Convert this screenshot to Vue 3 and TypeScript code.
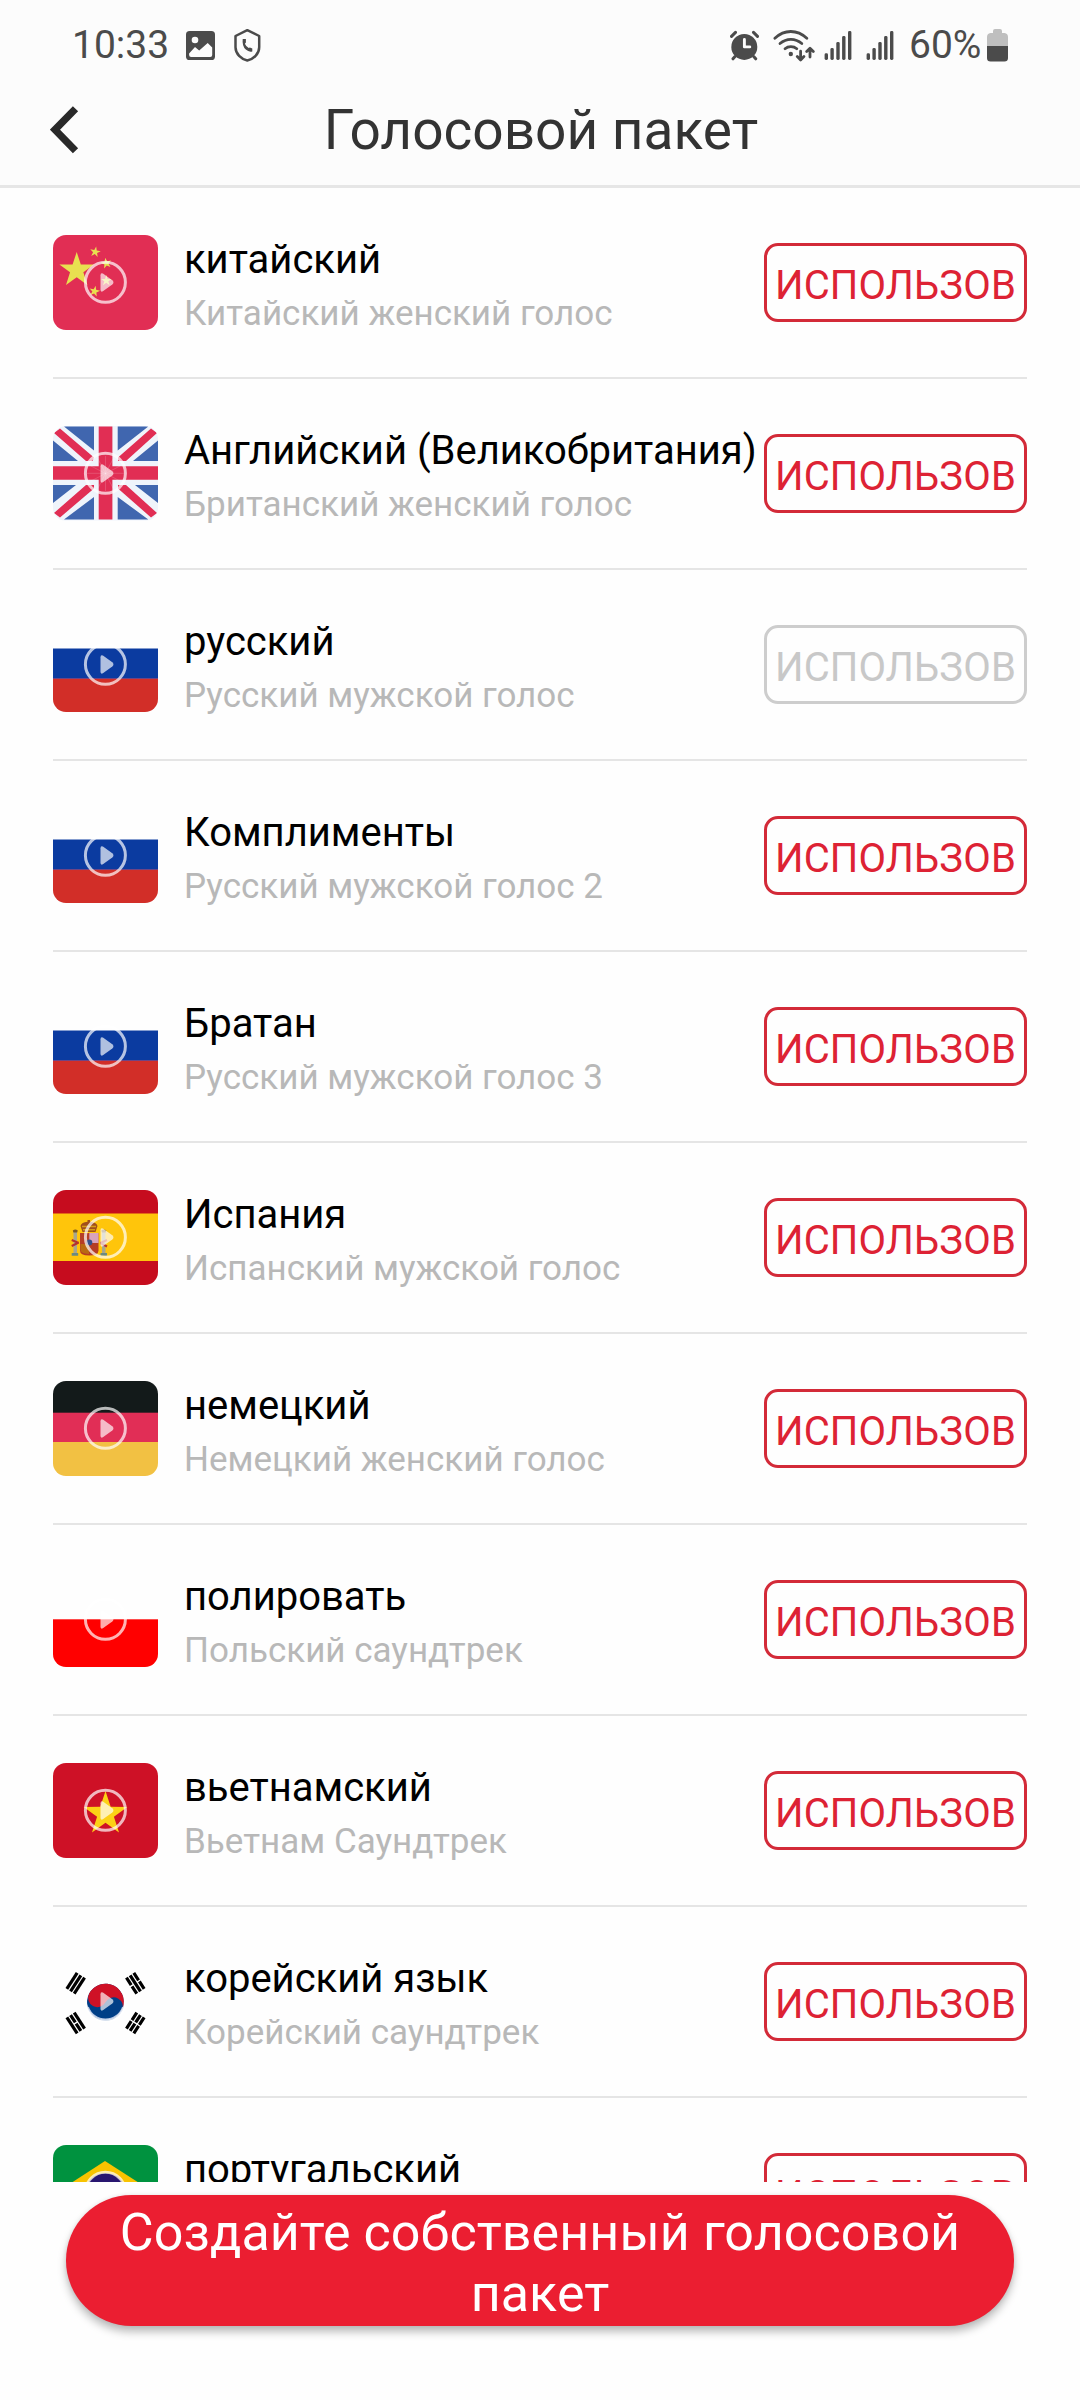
<script setup lang="ts">
type Flag = 'cn' | 'gb' | 'ru' | 'es' | 'de' | 'pl' | 'vn' | 'kr' | 'br'

interface VoicePack {
  flag: Flag
  name: string
  note?: string
  active?: boolean
}

const packs: VoicePack[] = [
  { flag: 'cn', name: 'китайский', note: 'Китайский женский голос' },
  { flag: 'gb', name: 'Английский (Великобритания)', note: 'Британский женский голос' },
  { flag: 'ru', name: 'русский', note: 'Русский мужской голос', active: true },
  { flag: 'ru', name: 'Комплименты', note: 'Русский мужской голос 2' },
  { flag: 'ru', name: 'Братан', note: 'Русский мужской голос 3' },
  { flag: 'es', name: 'Испания', note: 'Испанский мужской голос' },
  { flag: 'de', name: 'немецкий', note: 'Немецкий женский голос' },
  { flag: 'pl', name: 'полировать', note: 'Польский саундтрек' },
  { flag: 'vn', name: 'вьетнамский', note: 'Вьетнам Саундтрек' },
  { flag: 'kr', name: 'корейский язык', note: 'Корейский саундтрек' },
  { flag: 'br', name: 'португальский' },
]

// Points of a five-pointed star around (cx, cy), turned by `turn` degrees.
function star(cx: number, cy: number, r: number, turn = 0): string {
  return Array.from({ length: 10 }, (_, i) => {
    const a = ((i * 36 - 90 + turn) * Math.PI) / 180
    const d = i % 2 ? r * 0.385 : r
    return `${(cx + d * Math.cos(a)).toFixed(2)},${(cy + d * Math.sin(a)).toFixed(2)}`
  }).join(' ')
}

const signalBars = [
  { x: 0.6, y: 25.3 },
  { x: 6.4, y: 20 },
  { x: 12.3, y: 14 },
  { x: 18.1, y: 8 },
  { x: 24, y: 3 },
]

// Trigrams of the Korean flag; `split` marks the bars broken in the middle.
const trigrams = [
  { x: 22.7, y: 29.3, turn: -57, split: [false, false, false] },
  { x: 82.3, y: 29.3, turn: 57, split: [true, false, true] },
  { x: 22.7, y: 69, turn: 57, split: [false, true, false] },
  { x: 82.3, y: 69, turn: -57, split: [true, true, true] },
]
</script>

<template>
  <div class="screen">
    <header class="header">
      <div class="status">
        <div class="status-side">
          <span class="clock">10:33</span>
          <svg class="ic-image" width="29" height="34" viewBox="0 0 29 34">
            <rect x="0" y="3" width="29" height="29" rx="3.6" fill="#4b4b4b" />
            <circle cx="9" cy="12" r="3.3" fill="#fcfcfc" />
            <path d="M3.1 25.5 9 19l4.2 3.4L21.7 15l4.5 4.4V27q0 2-2 2H5.1q-2 0-2-2z" fill="#fcfcfc" />
          </svg>
          <svg class="ic-shield" width="27" height="34" viewBox="0 0 27 34">
            <path d="M13.3 2.2 25.2 8v11.2c0 6.8-5.7 11.8-11.9 13.3C7.2 31 1.5 26 1.5 19.2V8z" fill="none" stroke="#4b4b4b" stroke-width="2.5" stroke-linejoin="round" />
            <path d="M8.7 11h3.2v3.6l-1 1.2q1 2.7 3.8 4.2l1.2-.6 2.4 1.2v2.8q-3.3 1-6.5-1.8-3.900-3.800-3.100-10.400z" fill="#4b4b4b" />
          </svg>
        </div>
        <div class="status-side">
          <svg width="29" height="34" viewBox="0 0 29 34">
            <circle cx="14.3" cy="18.9" r="13" fill="#4b4b4b" />
            <path d="m5 28.500-2 2.300M23.700 28.500l2 2.300M1.500 8.400 5.500 4.400M27.500 8.400 23.500 4.400" stroke="#4b4b4b" stroke-width="3" stroke-linecap="round" />
            <path d="M14.400 11.500v7.400h5.400" fill="none" stroke="#fcfcfc" stroke-width="2.9" stroke-linecap="round" stroke-linejoin="round" />
          </svg>
          <svg class="ic-wifi" width="42" height="34" viewBox="0 0 42 34">
            <g fill="none" stroke="#4b4b4b" stroke-width="2.8" stroke-linecap="round" stroke-linejoin="round">
              <path d="M1.900 10.300Q9 3.500 17.800 3.500T33.800 10.300" />
              <path d="M7 15.500q4.800-4.200 10.900-4.200t10.900 4.200" />
              <path d="M12 20.700q2.500-2.100 5.900-2.100t5.900 2.100" />
              <path d="M27.600 23.200v8.200m-3.300-2.800 3.300 3.300 3.300-3.300M37 29v-8.500m-3.300 3 3.300-3.300 3.300 3.300" />
            </g>
            <circle cx="17.8" cy="26" r="2.2" fill="#4b4b4b" />
          </svg>
          <svg v-for="n in 2" :key="n" :class="'ic-signal' + n" width="28" height="34" viewBox="0 0 28 34">
            <rect v-for="b in signalBars" :key="b.x" :x="b.x" :y="b.y" width="3.4" :height="32 - b.y" rx="1.4" fill="#4b4b4b" />
          </svg>
          <span class="percent">60%</span>
          <svg class="ic-battery" width="21" height="34" viewBox="0 0 21 34">
            <path d="M6 5V3q0-2 2-2h5q2 0 2 2v2h2.500Q21 5.500 21 9v9H0V9q0-3.500 3.500-4z" fill="#bfbfbf" />
            <path d="M0 18h21v12q0 3.600-3.600 3.600H3.600Q0 33.600 0 30z" fill="#4b4b4b" />
          </svg>
        </div>
      </div>
      <div class="titlebar">
        <svg class="back" width="30" height="50" viewBox="0 0 30 50">
          <path d="M25.500 3.700 5 24.700l20.500 21" fill="none" stroke="#292929" stroke-width="7.3" />
        </svg>
        <h1>Голосовой пакет</h1>
      </div>
    </header>

    <main class="list">
      <div v-for="(p, i) in packs" :key="i" class="row">
        <svg class="flag" width="105" height="95" viewBox="0 0 105 95">
          <template v-if="p.flag === 'cn'">
            <rect width="105" height="95" fill="#e12e54" />
            <g fill="#e8e050">
              <polygon :points="star(23.7, 35.2, 18.2)" />
              <polygon :points="star(42.2, 17, 5.6, 10)" />
              <polygon :points="star(53.3, 28.3, 5.6, -12)" />
              <polygon :points="star(53.3, 45.7, 5.6)" />
              <polygon :points="star(41.5, 56.3, 5.6, 12)" />
            </g>
          </template>
          <template v-else-if="p.flag === 'gb'">
            <rect width="105" height="94.5" fill="#eff4fb" />
            <path fill="#4066af" d="M11 .4h30V24.500zM64.700.4h30.600L64.700 24.500zM0 14.500 25 35H0zM105 14.500V35H80zM0 58.900h23L0 77zM82 58.900h23V77zM41 71v22.500H11zM64.700 71l30.600 22.500H64.700z" />
            <g fill="#e12e54">
              <path d="M45.700.4h13.700v39.900H105v13.400H59.400v39.800H45.700V53.700H0V40.300h45.700z" />
              <path d="M1 7 7 2.500l34 29-1.500 3.500H33zM65 31.500l33-29 6 4.500L73 35h-8zM33 58.900h8v3.600L7 91.500 1 87zM65 58.900h8L104 87l-6 4.500-33-29z" />
            </g>
            <path d="M38 40l29 15M38 55l29-15M45 33l15 29M60 33 45 62M52.500 30v35M34 47.300h37" stroke="#fff" stroke-opacity=".2" stroke-width=".8" />
          </template>
          <template v-else-if="p.flag === 'ru'">
            <rect y="31.5" width="105" height="30.5" fill="#0b3ba0" />
            <rect y="61" width="105" height="1" fill="#6f4484" />
            <rect y="62" width="105" height="33" fill="#d22e28" />
          </template>
          <template v-else-if="p.flag === 'es'">
            <rect width="105" height="95" fill="#c60c1e" />
            <rect y="23.5" width="105" height="47.5" fill="#ffc50b" />
            <path d="M20.500 42h3.500v21h-3.500zM49 42h3.500v21H49z" fill="#a8a68c" />
            <path d="M19.800 40.500q2.500-2 5 0l-.6 2h-3.800zM48.300 40.500q2.500-2 5 0l-.6 2H49z" fill="#7b5a24" />
            <path d="m18.700 50 7 3M18.700 56l7-3.500M47.500 53l6.500-3M47.500 53l6.500 3.500" stroke="#b5322e" stroke-width="2" />
            <path d="M18.700 63h6.500v2.800h-6.500zM47.500 63H54v2.800h-6.500z" fill="#6c8a80" />
            <path d="M27.500 36q1-4 7-4.300V30h2.500v1.700q6.500.3 7.500 4.300l-2 6H29.500z" fill="#a04f1b" />
            <path d="M29 36.500h14M30 39.700h12" stroke="#d69b1a" stroke-width="1.5" />
            <path d="M27 43h18.500v17.500q0 5-9.300 5t-9.200-5z" fill="#b63d25" />
            <path d="M36.300 43h9.200v10h-9.200z" fill="#d9a3bd" />
            <path d="M27.500 54h8.500v10q-8.500-.5-8.500-4z" fill="#b96a12" />
            <circle cx="36.3" cy="52.5" r="3" fill="#35508c" />
          </template>
          <template v-else-if="p.flag === 'de'">
            <rect width="105" height="32" fill="#131a1a" />
            <rect y="31.7" width="105" height="30" fill="#e12e56" />
            <rect y="61" width="105" height="34" fill="#f2c143" />
          </template>
          <rect v-else-if="p.flag === 'pl'" y="47.3" width="105" height="47.7" fill="#ff0000" />
          <template v-else-if="p.flag === 'vn'">
            <rect width="105" height="95" fill="#ce1126" />
            <polygon :points="star(52.5, 51, 23)" fill="#fcd116" />
          </template>
          <template v-else-if="p.flag === 'kr'">
            <g transform="translate(52.5 48.2) rotate(28)">
              <circle r="18.5" fill="#003f87" />
              <path d="M-18.500 0A18.500 18.500 0 0 1 18.500 0 9.250 9.250 0 0 0 0 0 9.250 9.250 0 0 1-18.500 0z" fill="#cf1126" />
            </g>
            <path d="M35 53a18.500 18.500 0 0 0 35 0" fill="none" stroke="#b9c9e4" stroke-width="1.8" />
            <g v-for="t in trigrams" :key="`${t.x}-${t.y}`" :transform="`translate(${t.x} ${t.y}) rotate(${t.turn})`" stroke="#000" stroke-width="3.2">
              <path v-for="(s, k) in t.split" :key="k" :d="s ? `M-9.5 ${(k - 1) * 4.4}h8.8m1.4 0h8.8` : `M-9.5 ${(k - 1) * 4.4}h19`" />
            </g>
          </template>
          <template v-else>
            <rect width="105" height="95" fill="#00923f" />
            <path d="M52 16 101 47.500 52 79 3.500 47.500z" fill="#f8c300" />
            <circle cx="52.5" cy="48" r="20" fill="#28166f" />
          </template>
          <circle cx="52.4" cy="47.3" r="20" fill="none" stroke="#fff" stroke-opacity=".7" stroke-width="3" />
          <path d="M47.500 40.200v14.600q0 2.600 2.400 1.500l9.400-6.800q2.300-2 0-4.200l-9.400-6.700q-2.400-1.100-2.400 1.600z" fill="#fff" fill-opacity=".68" />
        </svg>
        <div class="info">
          <div class="name">{{ p.name }}</div>
          <div class="note">{{ p.note }}</div>
        </div>
        <button class="use" :class="{ disabled: p.active }" type="button">ИСПОЛЬЗОВ</button>
      </div>
    </main>

    <footer class="footer">
      <button class="create" type="button">Создайте собственный голосовой пакет</button>
    </footer>
  </div>
</template>

<style>
body {
  background: #fefefe;
}
</style>

<style scoped>
.screen {
  display: flex;
  flex-direction: column;
  width: 1080px;
  height: 2400px;
  overflow: hidden;
  background: #fefefe;
  font-family: Roboto, 'Noto Sans', sans-serif;
}

svg {
  display: block;
  flex: none;
}

.header {
  flex: none;
  box-sizing: border-box;
  height: 188px;
  padding-top: 22px;
  border-bottom: 3px solid #e6e6e6;
  background: #fcfcfc;
}

.status {
  display: flex;
  justify-content: space-between;
  height: 46px;
  padding: 0 72px;
  color: #4b4b4b;
  font-size: 39px;
  line-height: 46px;
}

.status-side {
  display: flex;
  align-items: center;
}

.ic-image {
  margin-left: 17px;
}

.ic-shield {
  margin-left: 19px;
}

.ic-wifi {
  margin-left: 14px;
}

.ic-signal1 {
  margin-left: 9px;
}

.ic-signal2 {
  margin-left: 14px;
}

.percent {
  margin-left: 15px;
}

.ic-battery {
  margin-left: 5.6px;
}

.titlebar {
  display: grid;
  grid-template-columns: 1fr auto 1fr;
  align-items: center;
  height: 64px;
  margin-top: 30px;
  padding-left: 2px;
}

.back {
  margin: 0 0 1px 48px;
}

h1 {
  margin: 0;
  color: #333;
  font-size: 55px;
  font-weight: 400;
  line-height: 64px;
}

.list {
  flex: none;
  height: 1994px;
  padding: 0 53px;
  overflow: hidden;
}

.row {
  display: flex;
  align-items: center;
  box-sizing: border-box;
  height: 191px;
  border-bottom: 2px solid #e5e5e5;
}

.flag {
  border-radius: 13px;
  overflow: hidden;
}

.info {
  flex: 1;
  min-width: 0;
  margin-left: 26px;
  padding-top: 5px;
  white-space: nowrap;
}

.name {
  color: #000;
  font-size: 40px;
  letter-spacing: -0.02px;
  line-height: 47px;
}

.note {
  min-height: 41px;
  margin-top: 10px;
  color: #b8b8b8;
  font-size: 35px;
  line-height: 41px;
}

.use {
  flex: none;
  box-sizing: border-box;
  width: 263px;
  height: 79px;
  padding: 5px 0 0;
  border: 3px solid #d32a38;
  border-radius: 14px;
  background: transparent;
  color: #dd2234;
  font-family: inherit;
  font-size: 40px;
  letter-spacing: 0.15px;
  line-height: 47px;
  white-space: nowrap;
}

.use.disabled {
  border-color: #cdcdcd;
  color: #c8c8c8;
}

.footer {
  display: flex;
  justify-content: center;
  padding-top: 13px;
}

.create {
  box-sizing: border-box;
  width: 948px;
  height: 131px;
  padding: 5px 40px 0;
  border: 0;
  border-radius: 66px;
  background: #eb1e31;
  box-shadow: 0 6px 9px rgba(0, 0, 0, 0.26), 0 0 4px rgba(0, 0, 0, 0.08);
  color: #fff;
  font-family: inherit;
  font-size: 52px;
  letter-spacing: 0.08px;
  line-height: 61px;
}
</style>
